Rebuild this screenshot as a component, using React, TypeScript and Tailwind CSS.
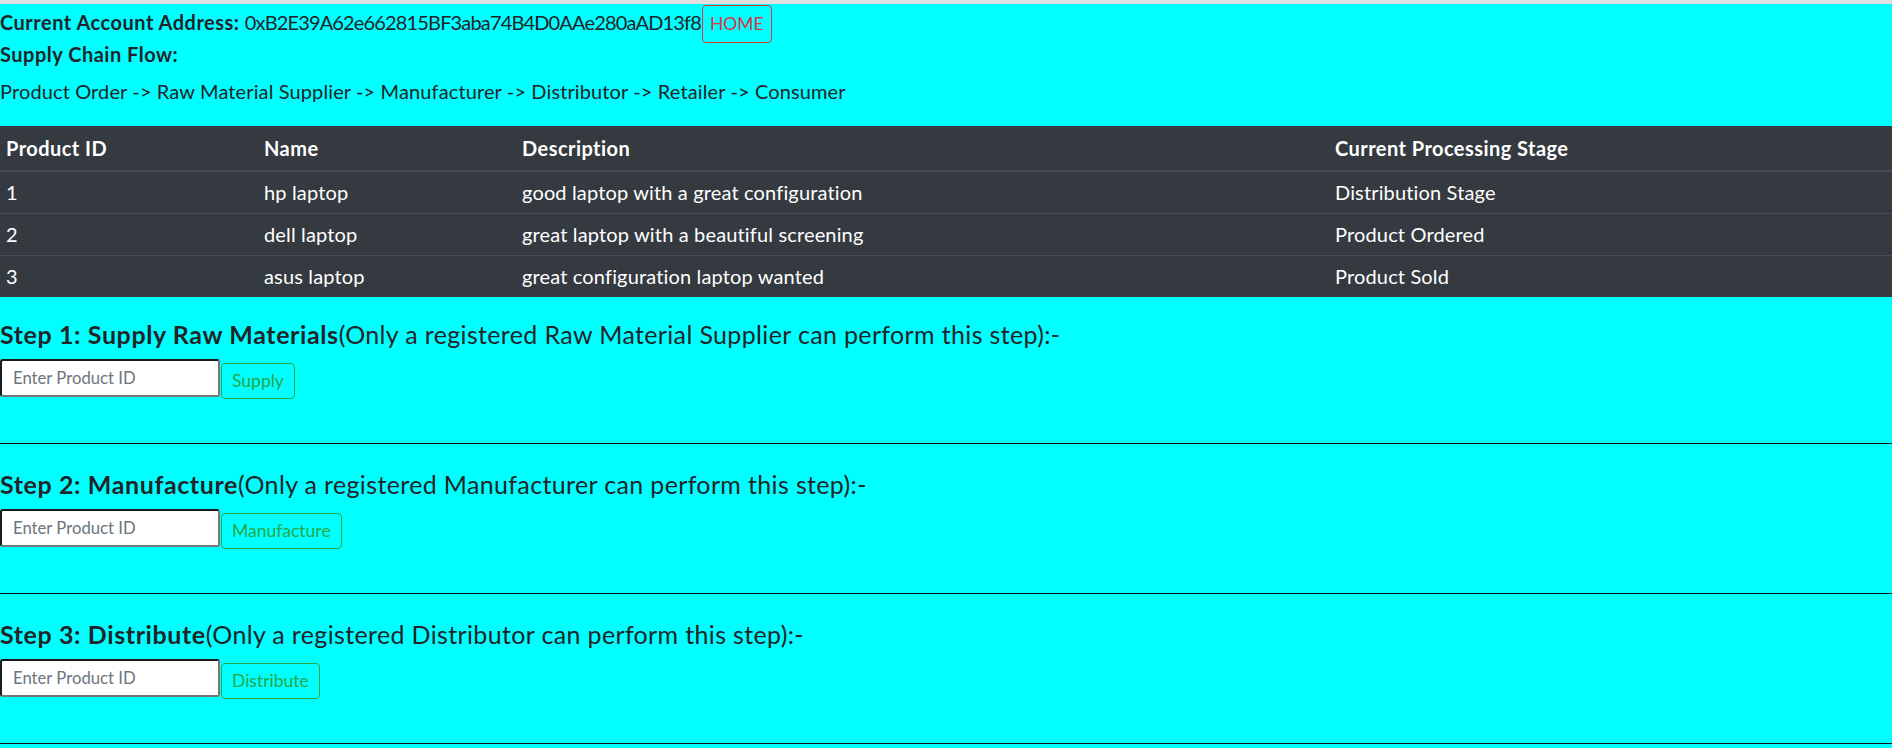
import React from "react";

const rows = [
  { id: "1", name: "hp laptop", desc: "good laptop with a great configuration", stage: "Distribution Stage" },
  { id: "2", name: "dell laptop", desc: "great laptop with a beautiful screening", stage: "Product Ordered" },
  { id: "3", name: "asus laptop", desc: "great configuration laptop wanted", stage: "Product Sold" },
];

const steps = [
  { bold: "Step 1: Supply Raw Materials", rest: "(Only a registered Raw Material Supplier can perform this step):-", btn: "Supply" },
  { bold: "Step 2: Manufacture", rest: "(Only a registered Manufacturer can perform this step):-", btn: "Manufacture" },
  { bold: "Step 3: Distribute", rest: "(Only a registered Distributor can perform this step):-", btn: "Distribute" },
];

function Step({ s, first }: { s: (typeof steps)[number]; first: boolean }) {
  return (
    <div>
      <div className={`${first ? "mt-[22px]" : "mt-[25px]"} h-[30px] text-[25px] leading-[30px] text-[#212529] whitespace-nowrap`}>
        <span className="font-bold tracking-[0.6px]">{s.bold}</span>
        <span className="tracking-[0.35px]">{s.rest}</span>
      </div>
      <div className="mt-[10px] flex items-start h-[40px]">
        <input
          placeholder="Enter Product ID"
          className="w-[220px] h-[38px] bg-white border-2 border-t-[#1b1b1b] border-l-[#1b1b1b] border-b-[#767676] border-r-[#767676] rounded-[3px] px-[11px] text-[16.7px] text-[#212529] placeholder:text-[#6c757d] outline-none"
        />
        <button className="ml-[1px] mt-[4px] h-[36px] px-[10px] border border-[#28a745] rounded-[4px] text-[#28a745] text-[17.5px] leading-[26px] bg-transparent">
          {s.btn}
        </button>
      </div>
      <div className="mt-[44px] h-[1px] bg-[#111]" />
    </div>
  );
}

export default function App() {
  return (
    <div className="min-h-[748px] bg-[#00ffff] text-[#212529] text-[20px]" style={{ fontFamily: "Lato, 'Noto Sans', sans-serif" }}>
      <div className="h-[4px] bg-[#e0e0e0]" />
      <div className="mt-[1px] h-[34px] flex items-start">
        <span className="mt-[2px] leading-[30px] whitespace-nowrap">
          <span className="font-bold tracking-[0.5px]">Current Account Address: </span>
          <span className="tracking-[-0.85px]">0xB2E39A62e662815BF3aba74B4D0AAe280aAD13f8</span>
        </span>
        <button className="shrink-0 ml-[1px] h-[38px] px-[7px] border border-[#dc3545] rounded-[4px] text-[#dc3545] text-[17.5px] leading-[26px] bg-transparent">
          HOME
        </button>
      </div>
      <div className="h-[30px] leading-[30px] font-bold tracking-[0.5px]">Supply Chain Flow:</div>
      <div className="mt-[7px] h-[30px] leading-[30px] tracking-[0.12px]">
        Product Order -&gt; Raw Material Supplier -&gt; Manufacturer -&gt; Distributor -&gt; Retailer -&gt; Consumer
      </div>
      <table className="mt-[20px] w-full table-fixed border-collapse bg-[#343a40] text-white text-[20px]">
        <colgroup>
          <col className="w-[258px]" />
          <col className="w-[258px]" />
          <col className="w-[813px]" />
          <col />
        </colgroup>
        <thead>
          <tr className="h-[45px] border-b-2 border-[#454d55]">
            <th className="text-left font-bold tracking-[0.45px] px-[6px] py-0">Product ID</th>
            <th className="text-left font-bold tracking-[0.45px] px-[6px] py-0">Name</th>
            <th className="text-left font-bold tracking-[0.45px] px-[6px] py-0">Description</th>
            <th className="text-left font-bold tracking-[0.45px] px-[6px] py-0">Current Processing Stage</th>
          </tr>
        </thead>
        <tbody className="tracking-[0.15px]">
          {rows.map((r, i) => (
            <tr key={r.id} className={`h-[42px] ${i > 0 ? "border-t border-[#454d55]" : ""}`}>
              <td className="px-[6px] py-0">{r.id}</td>
              <td className="px-[6px] py-0">{r.name}</td>
              <td className="px-[6px] py-0">{r.desc}</td>
              <td className="px-[6px] py-0">{r.stage}</td>
            </tr>
          ))}
        </tbody>
      </table>
      {steps.map((s, i) => (
        <Step key={i} s={s} first={i === 0} />
      ))}
    </div>
  );
}
